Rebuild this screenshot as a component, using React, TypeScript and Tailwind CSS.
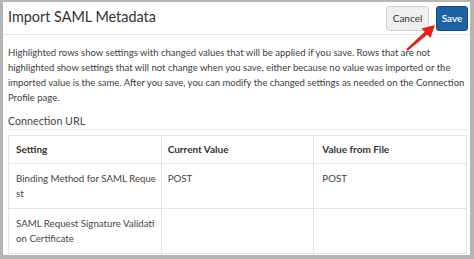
import React from 'react'

// settings column keeps the same line breaks as the source page
const rows = [
  { setting: ['Binding Method for SAML Reque', 'st'], current: 'POST', file: 'POST' },
  { setting: ['SAML Request Signature Validati', 'on Certificate'], current: '', file: '' },
]

const App: React.FC = () => {
  return (
    <div
      className="w-[474px] h-[259px] bg-[#b5b5b5] pl-[3px] pt-[2px] pr-[4px] pb-[4px]"
      style={{ fontFamily: 'Lato, "Open Sans", sans-serif' }}
    >
      <div className="relative h-full bg-white flex flex-col text-[#3a3a3a]">
        {/* header */}
        <div className="flex h-[33px] shrink-0 items-center justify-between border-b border-[#e6e6e6] pl-[5px] pr-[2px]">
          <h1 className="text-[14.4px] leading-none text-[#333] -mt-[2px]">Import SAML Metadata</h1>
          <div className="flex items-center gap-[7px]">
            <button className="h-[25px] w-[43px] rounded-[3px] border border-[#d0d0d0] bg-[#efefef] text-[10px] text-[#333]">
              Cancel
            </button>
            <button className="h-[25px] w-[32px] rounded-[3px] border border-[#14477a] bg-[#1f62a3] text-[10px] font-semibold text-white">
              Save
            </button>
          </div>
        </div>

        {/* body */}
        <div className="pl-[5px] pr-[2px]">
          <p className="mt-[10px] text-[9.5px] leading-[15px] text-[#3d3d3d]">
            Highlighted rows show settings with changed values that will be applied if you save. Rows that are not
            highlighted show settings that will not change when you save, either because no value was imported or the
            imported value is the same. After you save, you can modify the changed settings as needed on the Connection
            Profile page.
          </p>
          <h2 className="mt-[8px] mr-[1px] border-b border-[#e6e6e6] text-[10.7px] leading-[16px] text-[#444]">Connection URL</h2>

          <table className="mt-[5px] w-[459px] table-fixed border-collapse border border-[#e4e4e4] text-[9.7px] leading-[15px]">
            <thead>
              <tr className="text-[10px]">
                <th className="border border-[#e4e4e4] px-[7px] py-[6px] text-left font-bold text-[#333]">Setting</th>
                <th className="border border-[#e4e4e4] px-[6px] py-[6px] text-left font-bold text-[#333]">Current Value</th>
                <th className="border border-[#e4e4e4] px-[8px] py-[6px] text-left font-bold text-[#333]">Value from File</th>
              </tr>
            </thead>
            <tbody>
              {rows.map((r) => (
                <tr key={r.setting[0]} className="h-[44px]">
                  <td className="whitespace-nowrap border border-[#e4e4e4] px-[7px] py-[7px] align-top text-[#444]">
                    {r.setting[0]}
                    <br />
                    {r.setting[1]}
                  </td>
                  <td className="border border-[#e4e4e4] px-[6px] py-[7px] align-top text-[#444]">{r.current}</td>
                  <td className="border border-[#e4e4e4] px-[8px] py-[7px] align-top text-[#444]">{r.file}</td>
                </tr>
              ))}
            </tbody>
          </table>
        </div>

        {/* red annotation arrow */}
        <svg className="pointer-events-none absolute left-0 top-0 h-full w-full" viewBox="0 0 467 253">
          <polygon points="403.2,47.2 404.8,48.8 424.8,32.2 422.2,29.2" fill="#e3201b" />
          <polygon points="432,23 427.5,36 418.5,26.5" fill="#e3201b" />
        </svg>
      </div>
    </div>
  )
}

export default App
